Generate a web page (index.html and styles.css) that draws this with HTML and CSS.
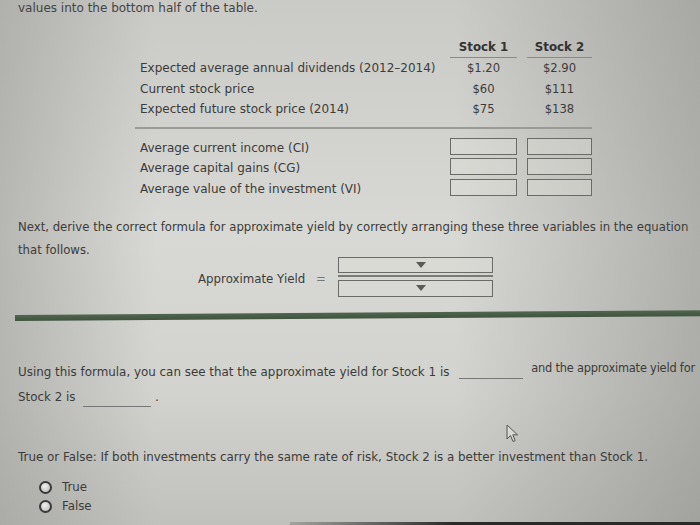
FILE: index.html
```html
<!DOCTYPE html>
<html>
<head>
<meta charset="utf-8">
<link rel="stylesheet" href="styles.css">
</head>
<body>
<div class="page">
  <p class="top">values into the bottom half of the table.</p>

  <div class="table">
    <div class="grid head">
      <div></div>
      <div class="hd">Stock 1</div>
      <div class="hd">Stock 2</div>
    </div>
    <div class="grid row">
      <div class="lbl">Expected average annual dividends (2012–2014)</div>
      <div class="val">$1.20</div>
      <div class="val">$2.90</div>
    </div>
    <div class="grid row">
      <div class="lbl">Current stock price</div>
      <div class="val">$60</div>
      <div class="val">$111</div>
    </div>
    <div class="grid row">
      <div class="lbl">Expected future stock price (2014)</div>
      <div class="val">$75</div>
      <div class="val">$138</div>
    </div>
    <div class="rule"></div>
    <div class="grid irow">
      <div class="lbl">Average current income (CI)</div>
      <div class="box"></div>
      <div class="box"></div>
    </div>
    <div class="grid irow">
      <div class="lbl">Average capital gains (CG)</div>
      <div class="box"></div>
      <div class="box"></div>
    </div>
    <div class="grid irow">
      <div class="lbl">Average value of the investment (VI)</div>
      <div class="box"></div>
      <div class="box"></div>
    </div>
  </div>

  <p class="para">Next, derive the correct formula for approximate yield by correctly arranging these three variables in the equation that follows.</p>

  <div class="formula">
    <span class="flabel">Approximate Yield</span>
    <span class="eq">=</span>
    <div class="frac">
      <div class="dd"><span class="tri"></span></div>
      <div class="fline"></div>
      <div class="dd"><span class="tri"></span></div>
    </div>
  </div>

  <div class="greenbar"></div>

  <p class="using"><span class="l1">Using this formula, you can see that the approximate yield for Stock 1 is <span class="blank b1"></span></span><span class="raise">and the approximate yield for</span><br>Stock 2 is <span class="blank b2"></span> .</p>

  <p class="tf">True or False: If both investments carry the same rate of risk, Stock 2 is a better investment than Stock 1.</p>

  <div class="opts">
    <label class="opt"><span class="radio"></span>True</label>
    <label class="opt"><span class="radio"></span>False</label>
  </div>

  <svg class="cursor" width="14" height="20" viewBox="0 0 14 20">
    <path d="M1 1 L1 15 L4.5 11.5 L7 17.5 L9.2 16.6 L6.8 10.8 L11.5 10.8 Z" fill="#d8d8d4" stroke="#555" stroke-width="1"/>
  </svg>
  <div class="bottomdark"></div>
</div>
</body>
</html>
```

FILE: styles.css
```css
html, body {
  margin: 0;
  padding: 0;
  width: 700px;
  height: 525px;
  overflow: hidden;
}
body {
  font-family: "DejaVu Sans", Verdana, sans-serif;
  color: #3c3c3a;
  background:
    linear-gradient(90deg, rgba(150,150,146,0.5) 0%, rgba(150,150,146,0) 22%, rgba(150,150,146,0) 65%, rgba(125,125,121,0.45) 100%),
    linear-gradient(180deg, #cacac6 0%, #d8d8d4 45%, #d2d2ce 75%, #c0c0bc 100%);
}
.page {
  position: relative;
  width: 700px;
  height: 525px;
}
p { margin: 0; }
.top {
  font-size: 12px;
  line-height: 14px;
  padding-left: 18px;
  margin-top: 1px;
  color: #444;
}
.table {
  margin-top: 22px;
  margin-left: 135px;
  width: 457px;
  font-size: 12px;
}
.grid {
  display: grid;
  grid-template-columns: 305px 67px 65px;
  column-gap: 10px;
}
.head { height: 21px; }
.hd {
  font-weight: bold;
  text-align: center;
  border-bottom: 1px solid #8a8a86;
  line-height: 20px;
  color: #333;
  font-size: 11.8px;
}
.row { height: 20.5px; align-items: center; }
.lbl { padding-left: 5px; white-space: nowrap; }
.val { text-align: center; font-size: 11.6px; }
.rule {
  margin-top: 7px;
  border-top: 2px solid #9a9a96;
  height: 9px;
}
.irow {
  height: 20.5px;
  align-items: start;
}
.irow .lbl { line-height: 20px; }
.box {
  height: 15px;
  border: 1.5px solid #6a6a66;
  background: rgba(225,225,220,0.35);
}
.para {
  margin-top: 17px;
  padding-left: 18px;
  padding-right: 0;
  font-size: 11.7px;
  line-height: 23px;
}
.formula {
  display: flex;
  align-items: center;
  margin-top: -5px;
  margin-left: 198px;
  font-size: 11.8px;
}
.flabel { width: 118px; padding-top: 4px; }
.eq { width: 22px; color: #777; padding-top: 4px; }
.frac {
  width: 155px;
  display: flex;
  flex-direction: column;
}
.dd {
  height: 14px;
  border: 1.5px solid #6a6a66;
  display: flex;
  justify-content: center;
  align-items: center;
  background: rgba(225,225,220,0.3);
}
.dd + .fline + .dd { height: 15px; }
.fline {
  height: 1.5px;
  background: #7a7a76;
  margin: 2px 0 3px;
}
.tri {
  width: 0;
  height: 0;
  border-left: 5px solid transparent;
  border-right: 5px solid transparent;
  border-top: 6px solid #5a5a58;
  margin-left: 10px;
}
.greenbar {
  margin-top: 18px;
  margin-left: 15px;
  height: 6px;
  background: linear-gradient(180deg, #51664f, #3f533d);
  transform: rotate(-0.4deg);
  transform-origin: left center;
}
.using {
  margin-top: 39px;
  padding-left: 18px;
  font-size: 11.9px;
  line-height: 25px;
  white-space: nowrap;
}
.raise {
  position: relative;
  top: -4px;
  font-size: 11.4px;
  letter-spacing: -0.2px;
  margin-left: 8px;
}
.blank {
  display: inline-block;
  border-bottom: 1px solid #777;
  vertical-align: -3px;
  height: 1px;
}
.b1 { width: 64px; margin-left: 6px; }
.b2 { width: 68px; margin-left: 4px; vertical-align: -6px; }
.tf {
  margin-top: 40px;
  padding-left: 18px;
  font-size: 11.9px;
  line-height: 14px;
  white-space: nowrap;
}
.opts {
  margin-top: 17px;
  padding-left: 39px;
  font-size: 11.8px;
  display: flex;
  flex-direction: column;
  gap: 6px;
}
.opt {
  display: flex;
  align-items: center;
  gap: 10px;
  height: 13px;
}
.radio {
  width: 9px;
  height: 9px;
  border-radius: 50%;
  border: 2px solid #3a3a3a;
  background: radial-gradient(circle at 40% 35%, #f0f0ee, #b8b8b4);
}
.cursor {
  position: absolute;
  left: 506px;
  top: 423px;
}
.bottomdark {
  position: absolute;
  left: 290px;
  right: 0;
  bottom: 0;
  height: 4px;
  background: linear-gradient(90deg, rgba(40,40,40,0.2), #2a2a2a 40%);
}
```
